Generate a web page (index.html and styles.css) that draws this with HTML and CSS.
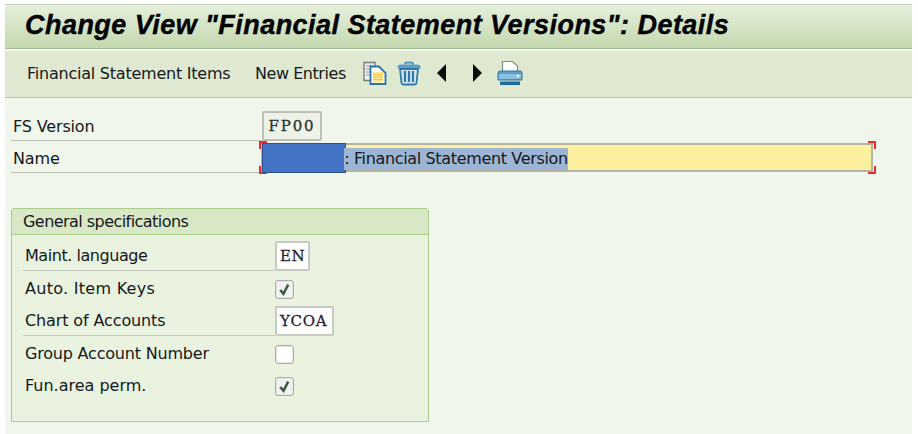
FILE: index.html
```html
<!DOCTYPE html>
<html lang="en">
<head>
<meta charset="utf-8">
<title>Change View</title>
<link rel="stylesheet" href="styles.css">
</head>
<body>
<div class="screen">
  <header class="title"><h1>Change View "Financial Statement Versions": Details</h1></header>
  <nav class="toolbar">
    <span class="tb-text first">Financial Statement Items</span>
    <span class="tb-text second">New Entries</span>
    <svg class="icon copy" width="24" height="24" viewBox="0 0 24 24">
      <path d="M1 1.500h11v18H1z" fill="#eee" stroke="#777" stroke-width="1.300"/>
      <path d="M3 5h6M3 8h6M3 11h6M3 14h6" stroke="#999"/>
      <path d="M7.500 5.500h8.500l6.500 6.500v11h-15z" fill="#fff" stroke="#2a74a5" stroke-width="1.800"/>
      <path d="M10 11h10v10.500H10z" fill="#fde58c"/>
      <path d="M10 13.500h10M10 16h10M10 18.500h10" stroke="#eec452"/>
    </svg>
    <svg class="icon trash" width="26" height="26" viewBox="0 0 26 26">
      <path d="M9 4.500q0-2 2-2h4q2 0 2 2" fill="none" stroke="#4d93bd" stroke-width="2"/>
      <path d="M1.500 7q0-2.500 3-2.500h17q3 0 3 2.500v1.500h-23z" fill="#5d9fc6"/>
      <path d="M4 9h18l-1.500 14q-.2 1.500-2 1.500h-11q-1.800 0-2-1.500z" fill="#d6e8f2" stroke="#2f7aa8" stroke-width="1.800"/>
      <path d="M9 11v11M13 11v11M17 11v11" stroke="#2f7aa8" stroke-width="2.200"/>
    </svg>
    <svg class="icon prev" width="11" height="20" viewBox="0 0 11 20"><path d="M10 1v18L1 10z" fill="#0c0c0c"/></svg>
    <svg class="icon next" width="11" height="20" viewBox="0 0 11 20"><path d="M1 1v18l9-9z" fill="#0c0c0c"/></svg>
    <svg class="icon print" width="26" height="26" viewBox="0 0 26 26">
      <path d="M5.500 12V1.500h10l5 4.500V12z" fill="#fff" stroke="#888" stroke-width="1.200"/>
      <path d="M1 13q0-2 2-2h20q2 0 2 2v7H1z" fill="#5a9fc9" stroke="#2f7aa8"/>
      <path d="M2 14h22v5H2z" fill="#8cc0de"/>
      <circle cx="21" cy="16" r="1.200" fill="#fff"/>
      <path d="M3 21.500h20v3.500H3z" fill="#1f6c9c"/>
    </svg>
  </nav>
  <main class="content">
    <div class="top-form">
      <div class="row">
        <label class="top-label">FS Version</label>
        <span class="field readonly">FP00</span>
      </div>
      <div class="row name-row">
        <label class="top-label">Name</label>
        <div class="name-field">
          <span class="corner tl"></span><span class="corner tr"></span><span class="corner bl"></span><span class="corner br"></span>
          <span class="mask"></span><span class="selected">: Financial Statement Version</span>
        </div>
      </div>
    </div>
    <section class="group">
      <h2>General specifications</h2>
      <div class="group-body">
        <div class="grow"><label class="maint">Maint. language</label><span class="field input en">EN</span></div>
        <div class="grow chk"><label class="auto">Auto. Item Keys</label><span class="check on"><svg width="17" height="17" viewBox="0 0 16 16"><path d="M4 8.500l3 3.500 4.500-8.500" fill="none" stroke="#3a5a44" stroke-width="2.400"/></svg></span></div>
        <div class="grow"><label class="chart">Chart of Accounts</label><span class="field input coa">YCOA</span></div>
        <div class="grow chk"><label class="gan">Group Account Number</label><span class="check"></span></div>
        <div class="grow chk"><label class="fun">Fun.area perm.</label><span class="check on"><svg width="17" height="17" viewBox="0 0 16 16"><path d="M4 8.500l3 3.500 4.500-8.500" fill="none" stroke="#3a5a44" stroke-width="2.400"/></svg></span></div>
      </div>
    </section>
  </main>
</div>
</body>
</html>
```
FILE: styles.css
```css
* { box-sizing: border-box; }
html, body { margin: 0; padding: 0; background: #fff; }
body { width: 918px; height: 434px; overflow: hidden; font-family: "DejaVu Sans", sans-serif; color: #14181c; }
.screen { margin: 4px 6px 0 5px; height: 430px; background: #f0f6ec; display: flex; flex-direction: column; }
.title { height: 45px; background: linear-gradient(#e6efdc, #c3d8ae); border-bottom: 1px solid #a9bf98; border-top: 1px solid #c8d4be; display: flex; align-items: center; padding-left: 20px; }
h1 { margin: 0; font: italic bold 27px "Liberation Sans", sans-serif; color: #000; letter-spacing: 0.46px; -webkit-text-stroke: 0.4px #000; white-space: nowrap; position: relative; top: -1px; }
.toolbar { margin-top: 2px; height: 47px; background: #dfe8d0; border-bottom: 1px solid #bccbb0; display: flex; align-items: center; padding: 0 0 2px 22px; }
.tb-text { font-size: 16px; white-space: nowrap; }
.first { width: 228px; letter-spacing: -0.23px; }
.second { width: 108px; letter-spacing: -0.45px; }
.icon { flex: none; display: block; }
.trash { margin-left: 9px; }
.prev { margin-left: 14px; }
.next { margin-left: 25px; }
.print { margin-left: 14px; }
.content { padding: 13px 0 0 6px; flex: 1; }
.row { display: flex; height: 30px; width: 862px; align-items: flex-end; position: relative; }
.top-label { display: block; width: 251px; height: 29px; border-bottom: 1px solid #b9bfb5; padding: 5px 0 0 2px; font-size: 16px; letter-spacing: -0.15px; }
.field { font: 15px "DejaVu Serif", serif; -webkit-text-stroke: 0.3px currentColor; display: flex; align-items: center; height: 30px; }
.readonly { width: 60px; background: #eef3e8; border: 2px solid #bcc0b8; justify-content: center; color: #30302c; letter-spacing: 1.8px; border-radius: 2px; }
.name-row { height: 32px; }
.name-row .top-label { height: 31px; padding-top: 7px; }
.name-field { position: relative; width: 614px; height: 29px; margin-bottom: 1px; background: #fff09f; border: 2px solid #b4b4a4; display: flex; align-items: center; }
.mask { position: absolute; left: -1px; top: -2px; width: 84px; height: 30px; background: #4472c4; border: 1px solid #2f528f; }
.selected { margin-left: 81px; background: #9db5d4; font-size: 16px; letter-spacing: -0.35px; line-height: 22px; white-space: nowrap; position: relative; top: 1px; }
.corner { position: absolute; width: 8px; height: 8px; border: 0 solid #ee2a2a; }
.tl { left: -4px; top: -4px; border-top-width: 2px; border-left-width: 2px; }
.tr { right: -5px; top: -4px; border-top-width: 2px; border-right-width: 2px; }
.bl { left: -4px; bottom: -4px; border-bottom-width: 2px; border-left-width: 2px; }
.br { right: -5px; bottom: -4px; border-bottom-width: 2px; border-right-width: 2px; }
.group { margin-top: 35px; width: 418px; height: 214px; border: 1px solid #a9cc8a; background: #e9f3df; border-radius: 3px 3px 0 0; }
h2 { margin: 0; height: 26px; background: #d8e8c6; border-bottom: 1px solid #a9cc8a; font-weight: normal; font-size: 16px; letter-spacing: -0.55px; padding: 3px 0 0 11px; }
.group-body { padding: 6px 0 0 11px; }
.grow { display: flex; height: 32.500px; align-items: flex-start; }
.grow label { display: block; width: 252px; padding: 5px 0 0 2px; height: 30px; font-size: 16px; border-bottom: 1px solid #c2c8bc; white-space: nowrap; flex: none; }
.grow.chk label { border-bottom: none; }
.maint { letter-spacing: -0.45px; }
.auto { letter-spacing: 0.28px; }
.chart { letter-spacing: -0.12px; }
.gan { letter-spacing: -0.2px; }
.fun { letter-spacing: 0px; }
.input { background: #fff; border: 2px solid #c8cac4; border-radius: 2px; padding-left: 3px; color: #2a1c30; }
.en { width: 35px; letter-spacing: 0.6px; }
.coa { width: 59px; letter-spacing: 0.8px; }
.check { width: 19px; height: 19px; margin-top: 6px; background: #fff; border: 1px solid #aaa; border-radius: 3px; display: flex; align-items: center; justify-content: center; box-shadow: inset 0 0 0 1px #e8e8e8; }
.check.on { background: #f2f3f0; }
```
